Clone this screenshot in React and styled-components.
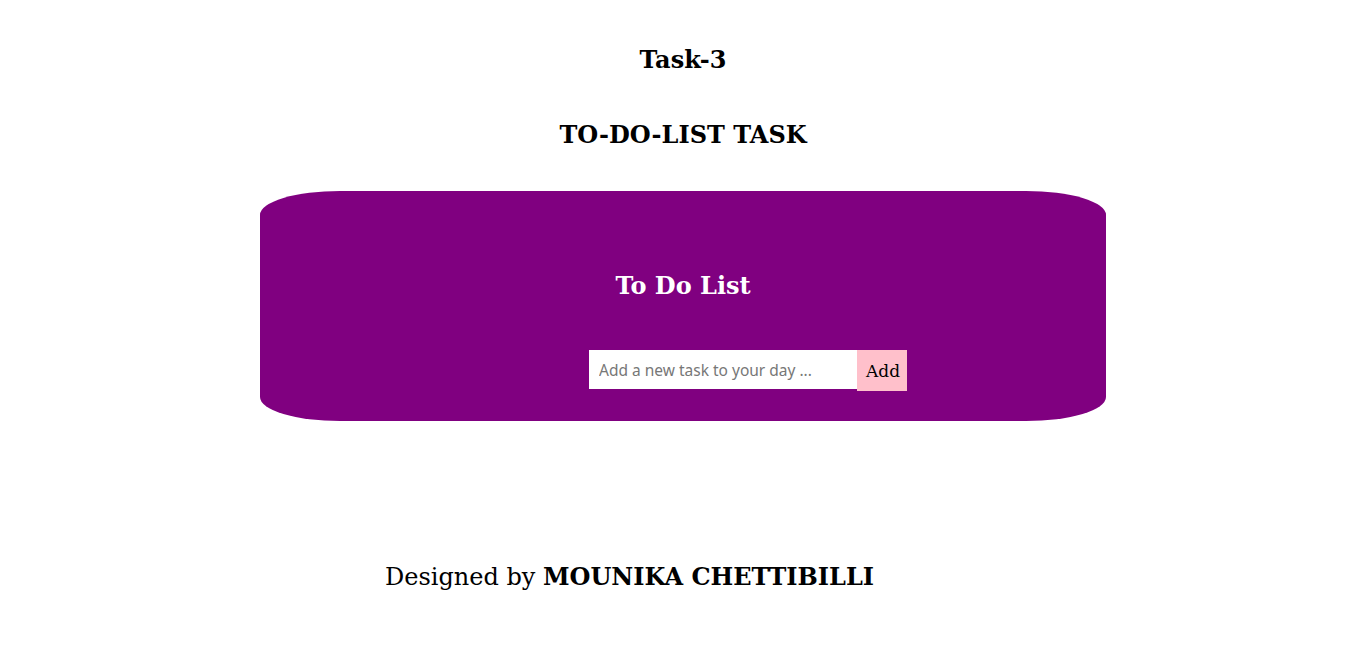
import React from 'react'
import styled, { createGlobalStyle } from 'styled-components'

const GlobalStyle = createGlobalStyle`
  body {
    margin: 0;
    background: #ffffff;
    font-family: "DejaVu Serif", serif;
    color: #000000;
  }
`

const Page = styled.div`
  padding-top: 46px;
  display: flex;
  flex-direction: column;
  align-items: center;
`

const Title = styled.h2`
  margin: 0;
  font-size: 24px;
  line-height: 28px;
  font-weight: bold;
  text-align: center;
`

const SubTitle = styled(Title)`
  margin-top: 47px;
`

const Card = styled.div`
  margin-top: 42px;
  width: 846px;
  height: 230px;
  box-sizing: border-box;
  padding-top: 81px;
  background: #800080;
  border-radius: 80px / 24px;
  display: flex;
  flex-direction: column;
  align-items: center;
`

const CardTitle = styled.h2`
  margin: 0;
  font-size: 24px;
  line-height: 28px;
  color: #ffffff;
`

const InputRow = styled.div`
  margin-top: 50px;
  padding-left: 130px;
  display: flex;
  align-items: flex-start;
`

const TaskInput = styled.input`
  width: 268px;
  height: 39px;
  box-sizing: border-box;
  border: none;
  outline: none;
  padding: 0 10px;
  font-family: "Noto Sans", sans-serif;
  font-size: 15.5px;
  color: #333;
  background: #ffffff;
  &::placeholder {
    color: #777777;
  }
`

const AddButton = styled.button`
  width: 50px;
  height: 41px;
  border: none;
  padding: 0 0 0 2px;
  background: #ffc0cb;
  font-family: "DejaVu Serif", serif;
  font-size: 17px;
  color: #000000;
  cursor: pointer;
`

const Footer = styled.p`
  margin: 142px 0 0 0;
  padding-right: 107px;
  font-size: 24px;
  line-height: 28px;
  text-align: center;
  b {
    font-weight: bold;
  }
`

const App = () => (
  <>
    <GlobalStyle />
    <Page>
      <Title>Task-3</Title>
      <SubTitle>TO-DO-LIST TASK</SubTitle>
      <Card>
        <CardTitle>To Do List</CardTitle>
        <InputRow>
          <TaskInput type="text" placeholder="Add a new task to your day ..." />
          <AddButton>Add</AddButton>
        </InputRow>
      </Card>
      <Footer>
        Designed by <b>MOUNIKA CHETTIBILLI</b>
      </Footer>
    </Page>
  </>
)

export default App
